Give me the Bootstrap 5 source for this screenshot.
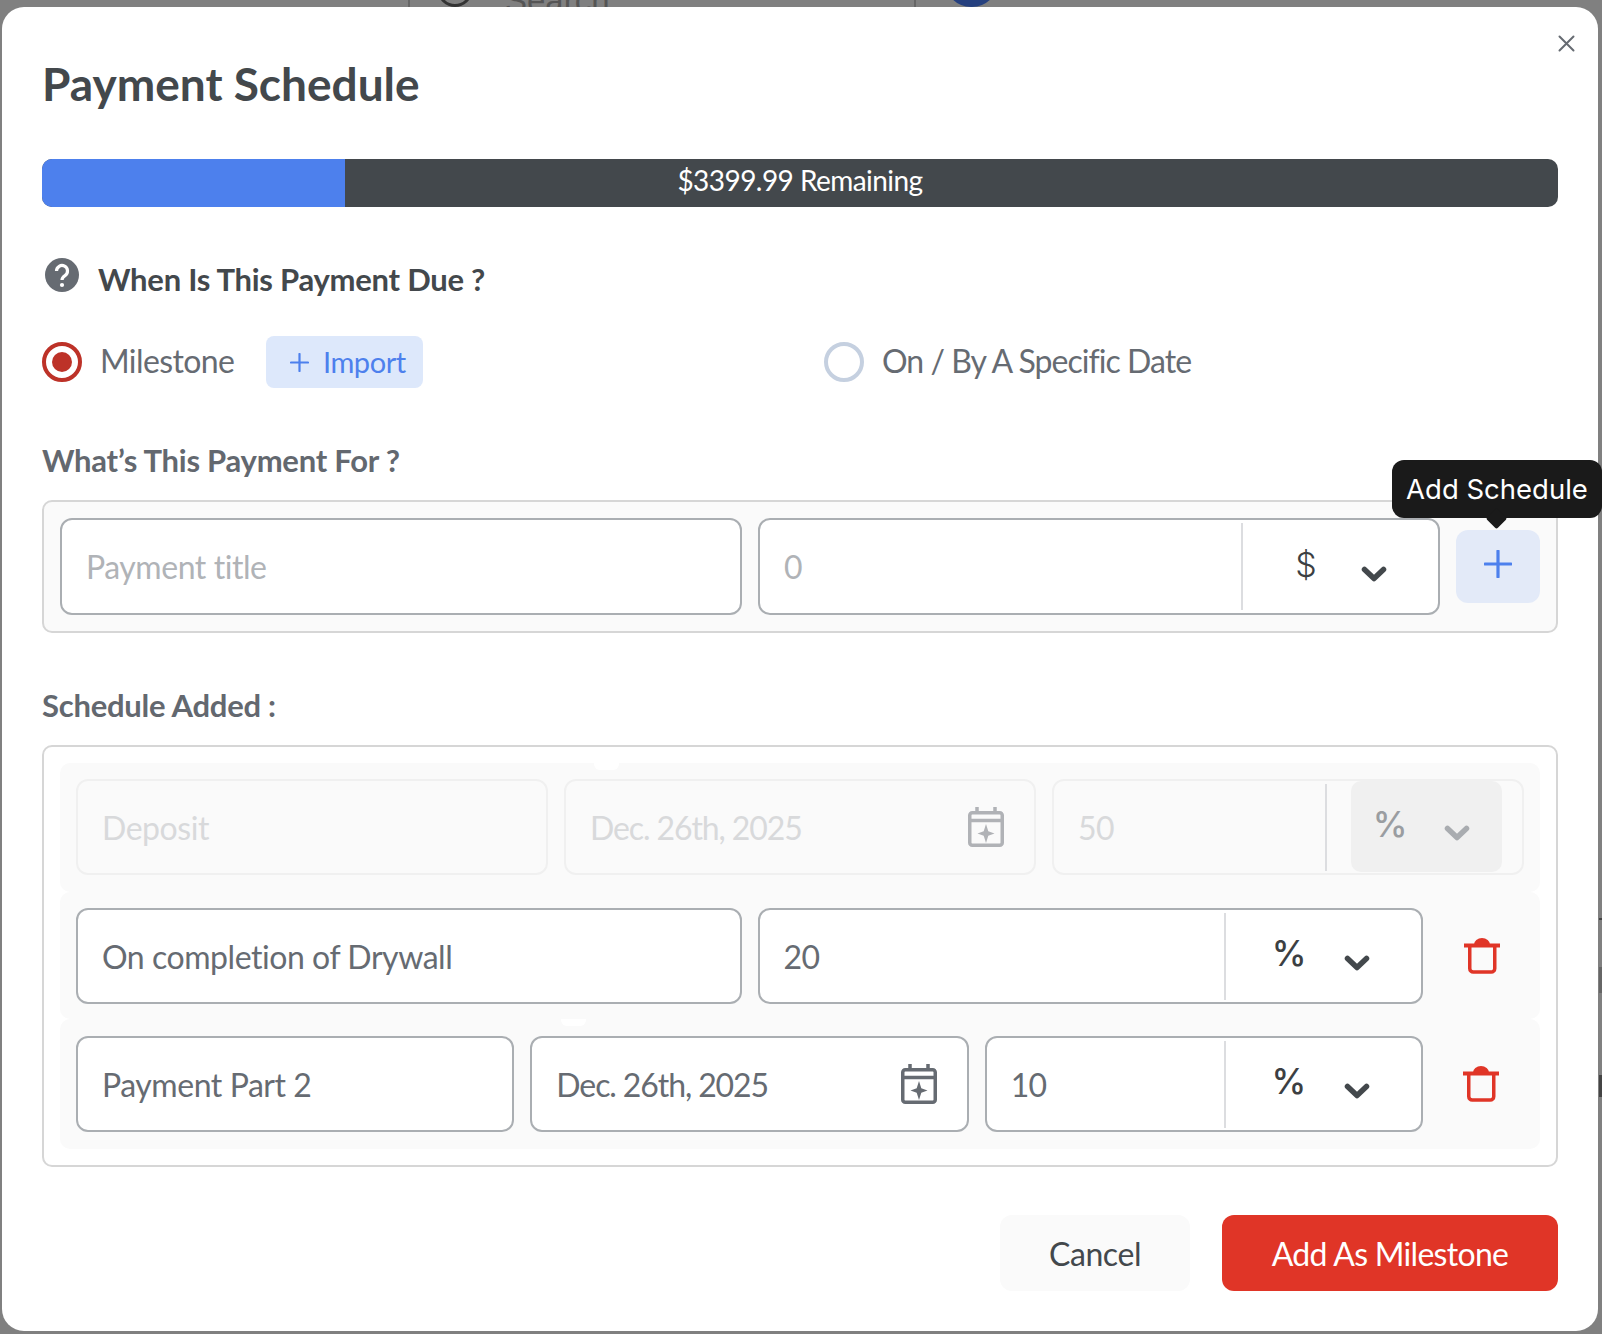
<!DOCTYPE html>
<html lang="en">
<head>
<meta charset="utf-8">
<title>Payment Schedule</title>
<link href="https://cdn.jsdelivr.net/npm/bootstrap@5.3.0/dist/css/bootstrap.min.css" rel="stylesheet">
<style>
html,body{height:100%;}
body{background:#808080;font-family:"Lato","Liberation Sans",sans-serif;overflow:hidden;position:relative;}
.behind{position:absolute;background:#666;}
.behind-line1{left:408px;top:0;width:2px;height:7px;}
.behind-line2{left:914px;top:0;width:2px;height:7px;}
.behind-dot{left:945px;top:-20px;width:53px;height:27px;border-radius:0 0 26px 26px;background:#25407f;}
.behind-lens{left:438px;top:-25px;width:34px;height:32px;border:3px solid #333;border-radius:50%;background:none;}
.behind-text{left:505px;top:-24px;color:#555;background:none;font-size:33px;font-family:"Liberation Sans",sans-serif;}
.behind-s1{left:1599px;top:918px;width:3px;height:2px;background:#444;}
.behind-s2{left:1599px;top:967px;width:3px;height:26px;background:#666;}
.behind-s3{left:1599px;top:1075px;width:3px;height:22px;background:#444;}
.sheet{position:absolute;left:2px;top:7px;width:1596px;height:1324px;border:0;border-radius:22px;background:#fff;padding:50px 40px 0;display:block;}
.close-x{position:absolute;right:23px;top:28px;padding:0;border:0;background:none;line-height:0;color:#666b72;}
.sheet-title{font-size:46px;line-height:54px;font-weight:700;color:#43484c;margin:0;}
.pay-bar{height:48px;border-radius:10px;background:#43484c;margin-top:48px;position:relative;}
.pay-fill{background:#4d80ed;}
.pay-text{position:absolute;inset:0 0 6px;display:flex;align-items:center;justify-content:center;color:#fff;font-size:28px;letter-spacing:-.55px;}
.q-row{margin-top:51px;height:44px;}
.q-icon{margin:0 19px 0 3px;flex:none;}
.q-text{font-size:31px;line-height:42px;font-weight:700;color:#43484c;margin:0;letter-spacing:-.25px;}
.radio-row{margin-top:34px;height:52px;}
.radio-left{width:782px;}
.radio-dot{width:40px;height:40px;border-radius:50%;border:4px solid #c5d0e0;flex:none;display:flex;align-items:center;justify-content:center;background:#fff;}
.radio-dot.on{border-color:#bd3228;}
.radio-dot.on::after{content:"";width:20px;height:20px;border-radius:50%;background:#bd3228;}
.radio-label{font-size:32px;line-height:46px;color:#666b72;margin:0 0 2px 18px;letter-spacing:-.6px;}
.radio-label.wide{letter-spacing:-.95px;}
.import-btn{margin-left:32px;width:157px;height:52px;background:#dde8fb;color:#4d80ed;border:0;border-radius:8px;font-size:29px;padding:0 0 0 6px;display:flex;align-items:center;justify-content:center;gap:14px;letter-spacing:-.45px;}
.sec-label{font-size:31px;line-height:38px;font-weight:700;color:#63686f;margin:53px 0 21px;letter-spacing:-.25px;}
.entry-box{border:2px solid #d6d6d6;border-radius:10px;background:#fafafa;padding:16px;}
.field{height:96px;border:2px solid #aaaeb2;border-radius:12px;background:#fff;font-size:32px;color:#666b72;padding:0 24px;box-shadow:none;letter-spacing:-.45px;}
.field.tight{letter-spacing:-1.1px;}
.field::placeholder{color:#b0b3b7;}
.field.tall{height:97px;}
.field:disabled{background:#fafafa;border-color:#f0f0f0;color:#d8d9db;}
.amt{height:96px;border:2px solid #aaaeb2;border-radius:12px;background:#fff;}
.amt.tall{height:97px;}
.amt-input{border:0;background:none;font-size:32px;color:#666b72;padding:0 24px;height:100%;flex:1 1 0;min-width:0;outline:0;letter-spacing:-.6px;}
.amt-input::placeholder{color:#b0b3b7;}
.amt-sep{width:2px;align-self:center;height:87px;background:#dcdde0;flex:none;}
.amt-unit{flex:none;width:195px;display:flex;align-items:center;color:#3c3f43;font-family:"Inter","Liberation Sans",sans-serif;font-size:35px;font-weight:500;padding-left:50px;gap:42px;}
.amt-unit svg{margin-top:14px;color:#43484c;}
.unit-glyph{width:26px;display:flex;justify-content:center;line-height:1;margin-top:-5px;}
.unit-glyph.thin{font-weight:300;font-size:34px;margin-top:-4px;}
.add-btn{width:84px;height:73px;background:#e3eaf8;border:0;border-radius:12px;flex:none;position:relative;padding:0 0 5px;display:flex;align-items:center;justify-content:center;margin-left:16px;}
.add-tip{position:absolute;left:-64px;top:-70px;width:210px;height:58px;background:#1a1a1a;border-radius:12px;color:#fff;font-family:"Inter","Liberation Sans",sans-serif;font-size:27.5px;line-height:59px;text-align:center;white-space:nowrap;}
.add-tip::after{content:"";position:absolute;left:97px;top:51px;width:15px;height:15px;background:#1a1a1a;transform:rotate(45deg);border-radius:2px;}
.sched-box{border:2px solid #d6d6d6;border-radius:10px;background:#fff;padding:16px;}
.sched-row{background:#fafafa;border-radius:10px;padding:16px;position:relative;}
.sched-row.r1{padding-bottom:17px;}
.sched-row.r2{padding-bottom:15px;}
.sched-row.r3{padding-top:17px;padding-bottom:17px;}
.pill{position:absolute;top:0;width:25px;height:7px;background:#fff;border-radius:0 0 6px 6px;}
.date-wrap{position:relative;}
.date-wrap .field{width:100%;}
.date-icon{position:absolute;right:32px;top:50%;transform:translateY(-50%);}
.f-eq{flex:1 1 0;min-width:0;}
.amt.off{background:#fafafa;border-color:#f0f0f0;}
.amt.off .amt-input{color:#d8d9db;}
.amt-unit.off{width:151px;height:91px;margin:0 20px 0 24px;padding-left:26px;background:#f0f0f0;border-radius:10px;color:#9a9da1;align-self:flex-start;gap:41px;}
.amt-unit.off svg{color:#a9acb0;margin-top:12px;}
.trash-cell{width:85px;flex:none;display:flex;align-items:center;justify-content:center;}
.foot{margin-top:48px;gap:32px;}
.btn-cancel,.btn-add{height:76px;border:0;border-radius:12px;font-size:32px;padding:0 0 0;line-height:78px;}
.btn-cancel{width:190px;background:#fafafa;color:#43484c;letter-spacing:-.4px;}
.btn-add{width:336px;background:#e03527;color:#fff;letter-spacing:-.7px;}
.btn-cancel:hover{background:#f3f3f3;color:#43484c;}
.btn-add:hover{background:#cf2f22;color:#fff;}
</style>
</head>
<body>
<div class="behind behind-line1"></div>
<div class="behind behind-line2"></div>
<div class="behind behind-lens"></div>
<div class="behind behind-text">Search...</div>
<div class="behind behind-dot"></div>
<div class="behind behind-s1"></div>
<div class="behind behind-s2"></div>
<div class="behind behind-s3"></div>

<svg width="0" height="0" class="d-block position-absolute">
  <defs>
    <symbol id="chev" viewBox="0 0 26 16"><path d="M3.500 3.500 L13 12.500 L22.500 3.500" fill="none" stroke="currentColor" stroke-width="5.500" stroke-linecap="round" stroke-linejoin="round"/></symbol>
    <symbol id="cal" viewBox="0 0 36 40"><path d="M9 0v7M27 0v7" stroke="currentColor" stroke-width="3.500"/><rect x="1.750" y="5.750" width="32.500" height="32.500" rx="2.500" fill="none" stroke="currentColor" stroke-width="3.500"/><path d="M2 13.500h32" stroke="currentColor" stroke-width="3.500"/><path d="M18 17 L20.300 24.200 L26.500 26.500 L20.300 28.800 L18 36 L15.700 28.800 L9.500 26.500 L15.700 24.200 Z" fill="currentColor"/></symbol>
    <symbol id="trash" viewBox="0 0 36 36"><path d="M5.750 9V30.500a3.500 3.500 0 0 0 3.500 3.500H27.250a3.500 3.500 0 0 0 3.500-3.500V9" fill="none" stroke="#e03527" stroke-width="3.500"/><path d="M0 7.500h36" stroke="#e03527" stroke-width="4"/><path d="M10 6.500a8 6.500 0 0 1 16 0z" fill="#e03527"/></symbol>
  </defs>
</svg>

<div class="modal-content sheet">
  <button class="close-x" type="button" aria-label="Close"><svg width="17" height="17" viewBox="0 0 17 17"><path d="M1.500 1.500 L15.500 15.500 M15.500 1.500 L1.500 15.500" stroke="currentColor" stroke-width="2" stroke-linecap="round"/></svg></button>

  <h1 class="sheet-title">Payment Schedule</h1>

  <div class="progress pay-bar">
    <div class="progress-bar pay-fill" style="width:20%"></div>
    <div class="pay-text">$3399.99 Remaining</div>
  </div>

  <div class="d-flex q-row">
    <svg class="q-icon" width="34" height="34" viewBox="0 0 34 34"><circle cx="17" cy="17" r="17" fill="#666b72"/><path d="M11.500 13a5.500 5.500 0 1 1 8.500 4.600c-2 1.300-3 2-3 4.400" fill="none" stroke="#fff" stroke-width="3.200"/><circle cx="17" cy="27" r="2.100" fill="#fff"/></svg>
    <h2 class="q-text">When Is This Payment Due ?</h2>
  </div>

  <div class="d-flex align-items-center radio-row">
    <div class="d-flex align-items-center radio-left">
      <span class="radio-dot on"></span>
      <span class="radio-label">Milestone</span>
      <button type="button" class="btn import-btn"><svg width="19" height="19" viewBox="0 0 19 19"><path d="M9.500 1v17M1 9.500h17" stroke="#4d80ed" stroke-width="2.200" stroke-linecap="round"/></svg><span>Import</span></button>
    </div>
    <div class="d-flex align-items-center">
      <span class="radio-dot"></span>
      <span class="radio-label wide">On / By A Specific Date</span>
    </div>
  </div>

  <h3 class="sec-label">What’s This Payment For ?</h3>
  <div class="entry-box d-flex align-items-center">
    <div class="f-eq me-3"><input class="form-control field tall" type="text" placeholder="Payment title"></div>
    <div class="f-eq">
      <div class="amt tall d-flex">
        <input class="amt-input" type="text" placeholder="0">
        <span class="amt-sep"></span>
        <div class="amt-unit"><span class="unit-glyph thin">$</span><svg width="26" height="16"><use href="#chev"/></svg></div>
      </div>
    </div>
    <button type="button" class="btn add-btn">
      <svg width="28" height="28" viewBox="0 0 28 28"><path d="M14 1v26M1 14h26" stroke="#4d80ed" stroke-width="3.200" stroke-linecap="round"/></svg>
      <span class="add-tip">Add Schedule</span>
    </button>
  </div>

  <h3 class="sec-label">Schedule Added :</h3>
  <div class="sched-box">
    <div class="sched-row r1 d-flex gap-3">
      <span class="pill" style="left:534px"></span>
      <div class="f-eq"><input class="form-control field" type="text" value="Deposit" disabled></div>
      <div class="f-eq date-wrap"><input class="form-control field tight" type="text" value="Dec. 26th, 2025" disabled><svg class="date-icon" width="36" height="40" color="#b0b2b6"><use href="#cal"/></svg></div>
      <div class="f-eq">
        <div class="amt off d-flex">
          <input class="amt-input" type="text" value="50" disabled>
          <span class="amt-sep"></span>
          <div class="amt-unit off"><span class="unit-glyph">%</span><svg width="26" height="16"><use href="#chev"/></svg></div>
        </div>
      </div>
    </div>
    <div class="sched-row r2 d-flex gap-3">
      <div class="f-eq"><input class="form-control field" type="text" value="On completion of Drywall"></div>
      <div class="f-eq">
        <div class="amt d-flex">
          <input class="amt-input" type="text" value="20">
          <span class="amt-sep"></span>
          <div class="amt-unit"><span class="unit-glyph">%</span><svg width="26" height="16"><use href="#chev"/></svg></div>
        </div>
      </div>
      <div class="trash-cell"><svg width="36" height="36"><use href="#trash"/></svg></div>
    </div>
    <div class="sched-row r3 d-flex gap-3">
      <span class="pill" style="left:501px"></span>
      <div class="f-eq"><input class="form-control field" type="text" value="Payment Part 2"></div>
      <div class="f-eq date-wrap"><input class="form-control field tight" type="text" value="Dec. 26th, 2025"><svg class="date-icon" width="36" height="40" color="#666b72"><use href="#cal"/></svg></div>
      <div class="f-eq">
        <div class="amt d-flex">
          <input class="amt-input" type="text" value="10">
          <span class="amt-sep"></span>
          <div class="amt-unit"><span class="unit-glyph">%</span><svg width="26" height="16"><use href="#chev"/></svg></div>
        </div>
      </div>
      <div class="trash-cell"><svg width="36" height="36"><use href="#trash"/></svg></div>
    </div>
  </div>

  <div class="d-flex justify-content-end foot">
    <button type="button" class="btn btn-cancel">Cancel</button>
    <button type="button" class="btn btn-add">Add As Milestone</button>
  </div>
</div>
<script src="https://cdn.jsdelivr.net/npm/bootstrap@5.3.0/dist/js/bootstrap.bundle.min.js"></script>
</body>
</html>
